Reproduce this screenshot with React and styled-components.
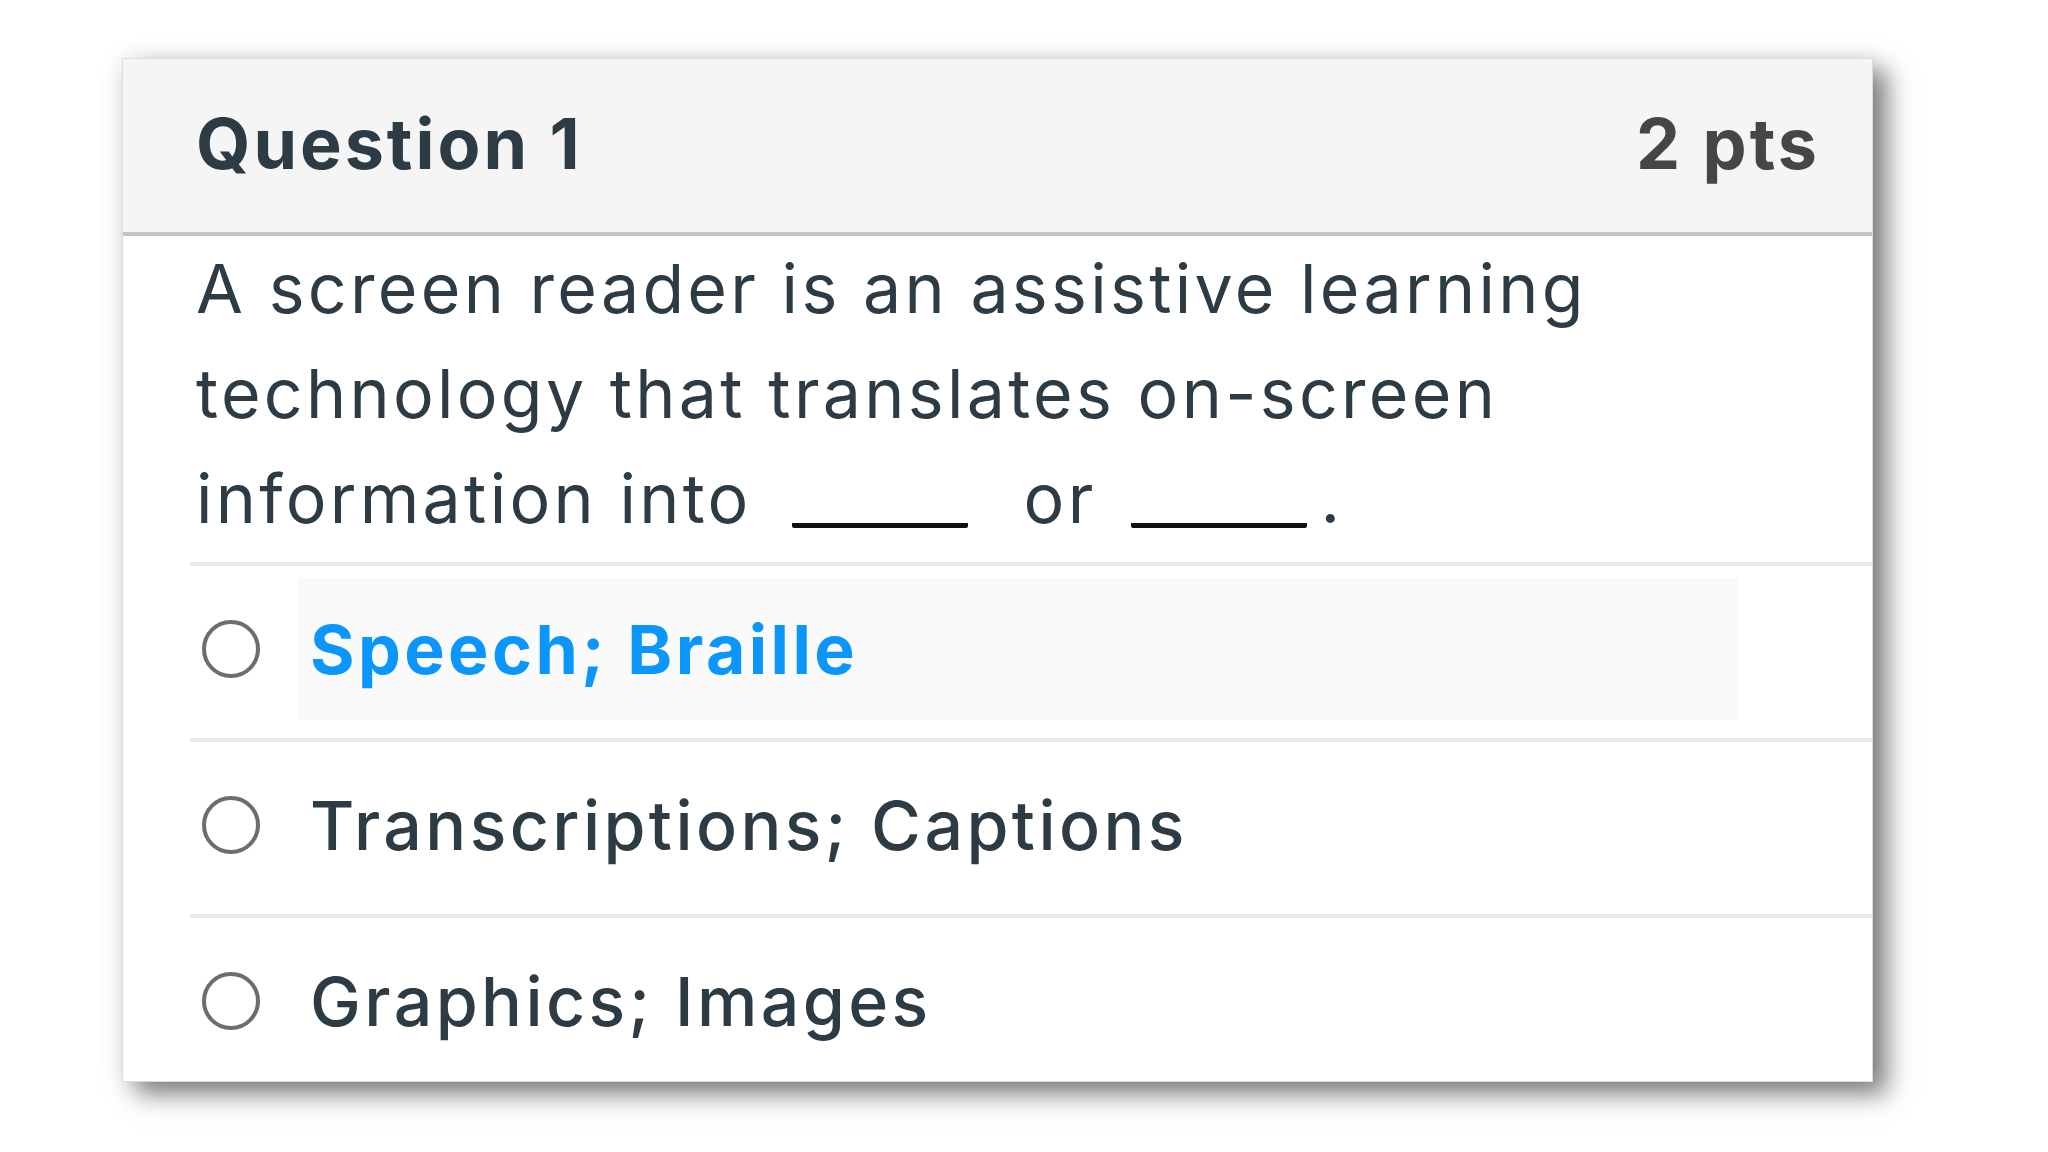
import React from 'react'
import styled, { createGlobalStyle } from 'styled-components'

const GlobalStyle = createGlobalStyle`
  html, body {
    margin: 0;
    padding: 0;
    background: #ffffff;
  }
  body {
    font-family: Inter, "Noto Sans", "Liberation Sans", sans-serif;
    color: #2d3b45;
  }
`

const answers = [
  { id: 'a1', label: 'Speech; Braille', selected: true },
  { id: 'a2', label: 'Transcriptions; Captions' },
  { id: 'a3', label: 'Graphics; Images' },
]

export default function App() {
  return (
    <>
      <GlobalStyle />
      <Page>
        <Card>
          <Header>
            <Title>Question 1</Title>
            <Points>2 pts</Points>
          </Header>
          <QuestionText>
            A screen reader is an assistive learning technology that translates on-screen information into
            <Blank $left={40} $right={56} aria-label="blank" />
            or
            <Blank $left={34} $right={14} aria-label="blank" />.
          </QuestionText>
          <AnswerList>
            {answers.map((a) => (
              <AnswerRow key={a.id}>
                <Radio type="radio" name="q1" id={a.id} />
                <AnswerLabel htmlFor={a.id} $selected={a.selected}>
                  {a.label}
                </AnswerLabel>
              </AnswerRow>
            ))}
          </AnswerList>
        </Card>
      </Page>
    </>
  )
}

const Page = styled.div`
  padding: 58px 0 0 122px;
  min-height: 1152px;
  box-sizing: border-box;
`

const Card = styled.section`
  width: 1751px;
  height: 1024px;
  box-sizing: border-box;
  background: #ffffff;
  border: 1px solid #dcdcdc;
  box-shadow: 14px 12px 24px rgba(0, 0, 0, 0.5), 0 0 24px rgba(0, 0, 0, 0.08);
  display: flex;
  flex-direction: column;
  overflow: hidden;
`

const Header = styled.header`
  height: 177px;
  box-sizing: border-box;
  background: #f5f5f5;
  border-bottom: 4px solid #c4c4c4;
  display: flex;
  align-items: center;
  justify-content: space-between;
  padding: 0 52px 4px 73px;
`

const Title = styled.h2`
  margin: 0;
  font-size: 70px;
  font-weight: 700;
  letter-spacing: 3px;
  color: #2d3b45;
`

const Points = styled.div`
  font-size: 70px;
  font-weight: 700;
  letter-spacing: 3px;
  color: #444745;
`

const QuestionText = styled.p`
  margin: 0;
  padding: 0 200px 0 73px;
  font-size: 68px;
  font-weight: 400;
  letter-spacing: 3.3px;
  line-height: 105px;
  color: #2d3b45;
  height: 326px;
  box-sizing: border-box;
`

const Blank = styled.span`
  display: inline-block;
  width: 176px;
  height: 10px;
  border-bottom: 5px solid #111111;
  border-radius: 2px;
  vertical-align: -5px;
  margin-left: ${({ $left }) => $left}px;
  margin-right: ${({ $right }) => $right}px;
`

const AnswerList = styled.div`
  margin-left: 67px;
  display: flex;
  flex-direction: column;
  flex: 1;
`

const AnswerRow = styled.div`
  border-top: 4px solid #ebebeb;
  display: flex;
  align-items: flex-start;
  height: 176px;
  box-sizing: border-box;
  padding: 12px 0 0 12px;

  &:last-child {
    height: auto;
    flex: 1;
  }
`

const Radio = styled.input`
  appearance: none;
  -webkit-appearance: none;
  margin: 42px 0 0;
  width: 58px;
  height: 58px;
  flex: 0 0 58px;
  border: 4px solid #6d6d6d;
  border-radius: 50%;
  box-sizing: border-box;
  background: #ffffff;
`

const AnswerLabel = styled.label`
  margin-left: 38px;
  width: 1440px;
  height: 142px;
  box-sizing: border-box;
  display: flex;
  align-items: center;
  padding-left: 12px;
  font-size: 68px;
  letter-spacing: 3.4px;
  font-weight: ${({ $selected }) => ($selected ? 700 : 500)};
  color: ${({ $selected }) => ($selected ? '#0b96fb' : '#2d3b45')};
  background: ${({ $selected }) => ($selected ? '#fafafa' : 'transparent')};
`
